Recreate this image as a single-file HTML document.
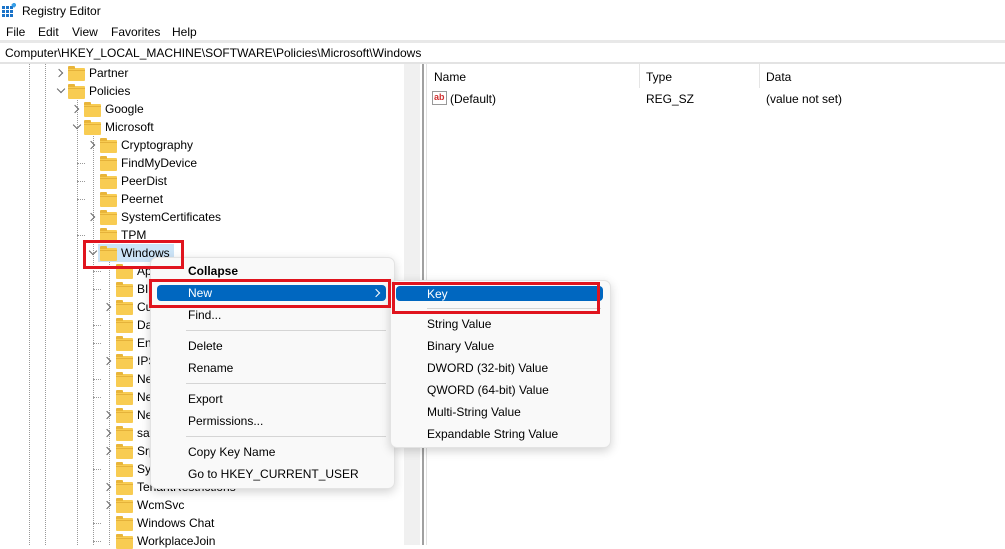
<!DOCTYPE html>
<html><head><meta charset="utf-8"><style>
*{margin:0;padding:0;box-sizing:border-box}
body{width:1005px;height:545px;overflow:hidden;background:#fff;font-family:"Liberation Sans",sans-serif;font-size:12px;color:#000;position:relative}
.a{position:absolute;white-space:nowrap}
.f{position:absolute;width:17px;height:13px;background:#f8cc52;border-radius:1px}
.f:before{content:"";position:absolute;left:0;top:-2px;width:7px;height:3px;background:#e9b53a;border-radius:1px 1px 0 0}
.f:after{content:"";position:absolute;left:0;top:2px;width:17px;height:1px;background:#e5b23a}
.ch{position:absolute;width:6px;height:6px;border-right:1.3px solid #666;border-bottom:1.3px solid #666}
.r{transform:rotate(-45deg)}
.d{transform:rotate(45deg)}
.vl{position:absolute;width:0;border-left:1px dotted #999}
.hl{position:absolute;height:0;border-top:1px dotted #999;width:8px}
.mi{position:absolute;font-size:12px}
.red{position:absolute;border:3px solid #e0141e}
</style></head><body>
<!-- title -->
<div class="a" style="left:2px;top:3px;width:14px;height:14px">
<svg width="14" height="14"><g fill="#1a73c8"><rect x="0" y="3" width="3" height="3"/><rect x="4" y="3" width="3" height="3"/><rect x="8" y="3" width="3" height="3"/><rect x="0" y="7" width="3" height="3"/><rect x="4" y="7" width="3" height="3"/><rect x="8" y="7" width="3" height="3"/><rect x="0" y="11" width="3" height="3"/><rect x="4" y="11" width="3" height="3"/><rect x="8" y="11" width="3" height="3"/></g><rect x="10" y="0" width="4" height="4" fill="#3aa0e8" transform="rotate(45 12 2)"/></svg></div>
<div class="a" style="left:22px;top:4px;font-size:12px">Registry Editor</div>
<div class="a" style="left:6px;top:25px">File</div>
<div class="a" style="left:38px;top:25px">Edit</div>
<div class="a" style="left:72px;top:25px">View</div>
<div class="a" style="left:111px;top:25px">Favorites</div>
<div class="a" style="left:172px;top:25px">Help</div>
<div class="a" style="left:0;top:40px;width:1005px;height:3px;background:#e8e8e8"></div>
<div class="a" style="left:5px;top:46px">Computer\HKEY_LOCAL_MACHINE\SOFTWARE\Policies\Microsoft\Windows</div>
<div class="a" style="left:0;top:62px;width:1005px;height:2px;background:#e3e3e3"></div>
<!-- scrollbar / splitter -->
<div class="a" style="left:404px;top:64px;width:16px;height:481px;background:#f0f0f0"></div>
<div class="a" style="left:422px;top:64px;width:2px;height:481px;background:#a0a0a0"></div>
<div class="a" style="left:426px;top:64px;width:1px;height:481px;background:#e0e0e0"></div>
<!-- right pane -->
<div class="a" style="left:434px;top:70px">Name</div>
<div class="a" style="left:639px;top:64px;width:1px;height:24px;background:#e5e5e5"></div>
<div class="a" style="left:646px;top:70px">Type</div>
<div class="a" style="left:759px;top:64px;width:1px;height:24px;background:#e5e5e5"></div>
<div class="a" style="left:766px;top:70px">Data</div>
<div class="a" style="left:432px;top:91px;width:15px;height:14px;border:1px solid #999;background:#fff;font-size:9px;color:#d03030;font-weight:bold;line-height:10px;padding-left:1px">ab</div>
<div class="a" style="left:450px;top:92px">(Default)</div>
<div class="a" style="left:646px;top:92px">REG_SZ</div>
<div class="a" style="left:766px;top:92px">(value not set)</div>
<!-- tree dotted lines -->
<div class="vl" style="left:29px;top:64px;height:481px"></div>
<div class="vl" style="left:45px;top:64px;height:481px"></div>
<div class="vl" style="left:77px;top:100px;height:445px"></div>
<div class="vl" style="left:93px;top:136px;height:409px"></div>
<div class="vl" style="left:109px;top:262px;height:283px"></div>
<div id="tree"></div>
<script>
var rows=[
[60,1,'r','Partner'],[60,1,'d','Policies'],[76,1,'r','Google'],[76,1,'d','Microsoft'],
[92,1,'r','Cryptography'],[92,0,'','FindMyDevice'],[92,0,'','PeerDist'],[92,0,'','Peernet'],[92,1,'r','SystemCertificates'],[92,0,'','TPM'],[92,1,'d','Windows'],
[108,0,'','Ap'],[108,0,'','BI'],[108,1,'r','Cu'],[108,0,'','Da'],[108,0,'','En'],[108,1,'r','IPS'],[108,0,'','Ne'],[108,0,'','Ne'],[108,1,'r','Ne'],[108,1,'r','saf'],[108,1,'r','Srp'],[108,0,'','Sy'],[108,1,'r','TenantRestrictions'],[108,1,'r','WcmSvc'],[108,0,'','Windows Chat'],[108,0,'','WorkplaceJoin']];
var h='';
rows.forEach(function(r,i){var c=73+i*18;var x=r[0];
if(r[1]){h+='<div class="ch '+r[2]+'" style="left:'+(x-(r[2]=='d'?2:4))+'px;top:'+(c-(r[2]=='d'?5:3))+'px"></div>'}
else{h+='<div class="hl" style="left:'+(x-15)+'px;top:'+c+'px"></div>'}
if(r[3]=='Windows'&&x==92){h+='<div class="a" style="left:98px;top:'+(c-9)+'px;width:76px;height:18px;background:#cce4f7"></div>'}
h+='<div class="f" style="left:'+(x+8)+'px;top:'+(c-5)+'px"></div>';
h+='<div class="a" style="left:'+(x+29)+'px;top:'+(c-7)+'px">'+r[3]+'</div>';});
document.getElementById('tree').innerHTML=h;
</script>
<!-- context menu -->
<div class="a" style="left:150px;top:257px;width:245px;height:232px;background:#f9f9f9;border:1px solid #e3e3e3;border-radius:7px;box-shadow:0 3px 10px rgba(0,0,0,.18)"></div>
<div class="mi" style="left:188px;top:264px;font-weight:bold">Collapse</div>
<div class="a" style="left:157px;top:285px;width:229px;height:16px;background:#0067c0;border-radius:4px"></div>
<div class="mi" style="left:188px;top:286px;color:#fff">New</div>
<div class="ch r" style="left:373px;top:290px;border-color:#fff"></div>
<div class="mi" style="left:188px;top:308px">Find...</div>
<div class="a" style="left:186px;top:330px;width:200px;height:1px;background:#d5d5d5"></div>
<div class="mi" style="left:188px;top:339px">Delete</div>
<div class="mi" style="left:188px;top:361px">Rename</div>
<div class="a" style="left:186px;top:383px;width:200px;height:1px;background:#d5d5d5"></div>
<div class="mi" style="left:188px;top:392px">Export</div>
<div class="mi" style="left:188px;top:414px">Permissions...</div>
<div class="a" style="left:186px;top:436px;width:200px;height:1px;background:#d5d5d5"></div>
<div class="mi" style="left:188px;top:445px">Copy Key Name</div>
<div class="mi" style="left:188px;top:467px">Go to HKEY_CURRENT_USER</div>
<!-- submenu -->
<div class="a" style="left:390px;top:280px;width:221px;height:168px;background:#f9f9f9;border:1px solid #e3e3e3;border-radius:7px;box-shadow:0 3px 10px rgba(0,0,0,.18)"></div>
<div class="a" style="left:396px;top:286px;width:207px;height:15px;background:#0067c0;border-radius:4px"></div>
<div class="mi" style="left:427px;top:287px;color:#fff">Key</div>
<div class="a" style="left:427px;top:308px;width:174px;height:1px;background:#d5d5d5"></div>
<div class="mi" style="left:427px;top:317px">String Value</div>
<div class="mi" style="left:427px;top:339px">Binary Value</div>
<div class="mi" style="left:427px;top:361px">DWORD (32-bit) Value</div>
<div class="mi" style="left:427px;top:383px">QWORD (64-bit) Value</div>
<div class="mi" style="left:427px;top:405px">Multi-String Value</div>
<div class="mi" style="left:427px;top:427px">Expandable String Value</div>
<!-- red boxes -->
<div class="red" style="left:83px;top:240px;width:101px;height:29px"></div>
<div class="red" style="left:149px;top:279px;width:242px;height:29px"></div>
<div class="red" style="left:392px;top:282px;width:208px;height:32px"></div>
</body></html>
